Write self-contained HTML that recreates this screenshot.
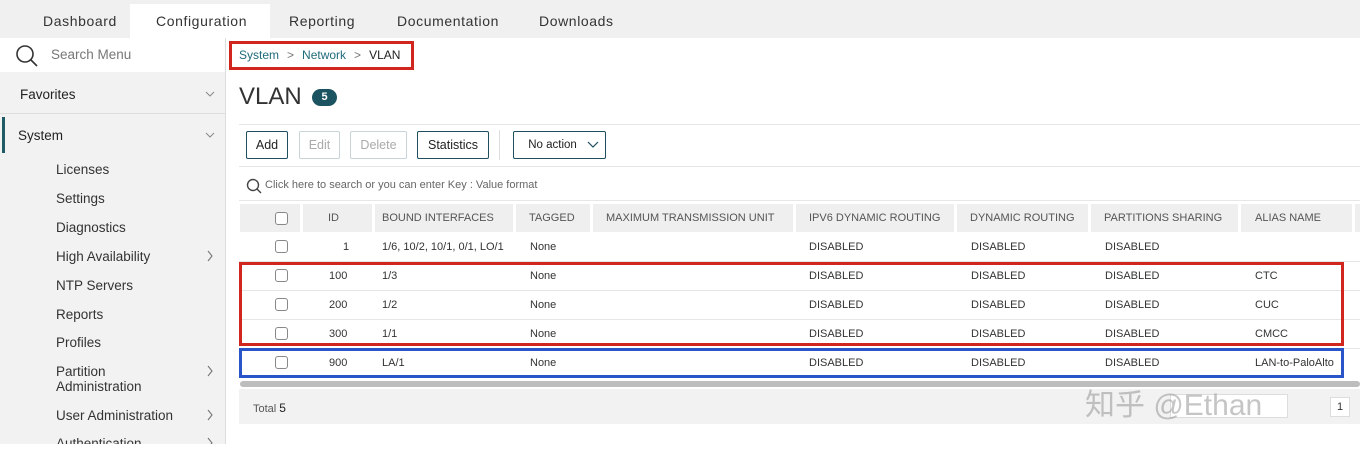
<!DOCTYPE html>
<html><head><meta charset="utf-8"><style>
*{box-sizing:border-box;margin:0;padding:0}
body{width:1360px;height:456px;background:#fff;font-family:"Liberation Sans",sans-serif;position:relative;overflow:hidden;color:#333}
.a{position:absolute;white-space:nowrap}
.nav{left:0;top:0;width:1360px;height:38px;background:#f0f0f0}
.tab{top:13px;font-size:14px;color:#333;letter-spacing:.6px}
.side{left:0;top:38px;width:225px;height:406px;background:#f2f2f2}
.si{left:56px;font-size:13.5px;color:#333}
.btn{top:131px;height:28px;border:1px solid #1f4e5f;border-radius:2px;font-size:12.5px;line-height:26px;text-align:center;background:#fff;color:#222}
.dis{border-color:#c8d4d8;color:#aaa}
.hd{top:204px;height:28px;background:#efefef;font-size:11px;color:#555;line-height:28px;padding-left:7px}
.cb{width:13px;height:13px;border:1.5px solid #888;border-radius:3px;background:#fff}
.row{font-size:11px;color:#333}
.line{left:239px;width:1121px;height:1px;background:#e6e6e6}
</style></head><body>
<div class="a nav"></div>
<div class="a" style="left:130px;top:4px;width:140px;height:34px;background:#fff"></div>
<div class="a tab" style="left:43px">Dashboard</div>
<div class="a tab" style="left:156px">Configuration</div>
<div class="a tab" style="left:289px">Reporting</div>
<div class="a tab" style="left:397px">Documentation</div>
<div class="a tab" style="left:539px">Downloads</div>

<div class="a side"></div>
<div class="a" style="left:0;top:38px;width:225px;height:34px;background:#fff"></div>
<svg class="a" style="left:14px;top:43px" width="26" height="26" viewBox="0 0 26 26"><circle cx="11" cy="11" r="8" fill="none" stroke="#333" stroke-width="1.6"/><line x1="17" y1="17" x2="23" y2="23" stroke="#333" stroke-width="1.6"/></svg>
<div class="a" style="left:51px;top:47px;font-size:13.5px;color:#777">Search Menu</div>
<div class="a" style="left:20px;top:87px;font-size:13.5px;color:#222">Favorites</div>
<svg class="a" style="left:205px;top:90px" width="10" height="8"><polyline points="1,2 5,6 9,2" fill="none" stroke="#888" stroke-width="1"/></svg>
<div class="a" style="left:0;top:113px;width:225px;height:1px;background:#ddd"></div>
<div class="a" style="left:2px;top:117px;width:3px;height:36px;background:#1f5c66"></div>
<div class="a" style="left:18px;top:128px;font-size:13.5px;color:#222">System</div>
<svg class="a" style="left:205px;top:131px" width="10" height="8"><polyline points="1,2 5,6 9,2" fill="none" stroke="#888" stroke-width="1"/></svg>
<div class="a si" style="top:162px">Licenses</div>
<div class="a si" style="top:191px">Settings</div>
<div class="a si" style="top:220px">Diagnostics</div>
<div class="a si" style="top:249px">High Availability</div>
<div class="a si" style="top:278px">NTP Servers</div>
<div class="a si" style="top:307px">Reports</div>
<div class="a si" style="top:335px">Profiles</div>
<div class="a si" style="top:364px;line-height:15px">Partition<br>Administration</div>
<div class="a si" style="top:408px">User Administration</div>
<div class="a si" style="top:436px">Authentication</div>
<svg class="a" style="left:206px;top:250px" width="8" height="12"><polyline points="2,1 6,6 2,11" fill="none" stroke="#777" stroke-width="1.1"/></svg>
<svg class="a" style="left:206px;top:365px" width="8" height="12"><polyline points="2,1 6,6 2,11" fill="none" stroke="#777" stroke-width="1.1"/></svg>
<svg class="a" style="left:206px;top:409px" width="8" height="12"><polyline points="2,1 6,6 2,11" fill="none" stroke="#777" stroke-width="1.1"/></svg>
<svg class="a" style="left:206px;top:437px" width="8" height="12"><polyline points="2,1 6,6 2,11" fill="none" stroke="#777" stroke-width="1.1"/></svg>
<div class="a" style="left:0;top:444px;width:1360px;height:12px;background:#fff"></div>
<div class="a" style="left:225px;top:38px;width:1px;height:406px;background:#ddd"></div>

<div class="a" style="left:229px;top:41px;width:185px;height:29px;border:3px solid #d0261e"></div>
<div class="a" style="left:239px;top:48px;font-size:12px"><span style="color:#1f6b7a">System</span><span style="color:#777;margin:0 8px">&gt;</span><span style="color:#1f6b7a">Network</span><span style="color:#777;margin:0 8px">&gt;</span><span style="color:#222">VLAN</span></div>
<div class="a" style="left:239px;top:83px;font-size:24px;color:#333">VLAN</div>
<div class="a" style="left:312px;top:89px;width:25px;height:17px;border-radius:9px;background:#1c5361;color:#fff;font-size:11px;font-weight:bold;text-align:center;line-height:17px">5</div>

<div class="a line" style="top:124px"></div>
<div class="a btn" style="left:246px;width:42px">Add</div>
<div class="a btn dis" style="left:299px;width:41px">Edit</div>
<div class="a btn dis" style="left:350px;width:57px">Delete</div>
<div class="a btn" style="left:417px;width:72px">Statistics</div>
<div class="a" style="left:499px;top:130px;width:1px;height:30px;background:#ddd"></div>
<div class="a btn" style="left:513px;width:93px;font-size:11.5px;padding-right:14px">No action</div>
<svg class="a" style="left:587px;top:141px" width="12" height="8"><polyline points="1,1 6,6 11,1" fill="none" stroke="#1f4e5f" stroke-width="1.2"/></svg>
<div class="a line" style="top:166px"></div>
<svg class="a" style="left:246px;top:178px" width="16" height="16"><circle cx="7" cy="7" r="5.5" fill="none" stroke="#444" stroke-width="1.4"/><line x1="11" y1="11" x2="15" y2="15" stroke="#444" stroke-width="1.4"/></svg>
<div class="a" style="left:265px;top:179px;font-size:11px;color:#666">Click here to search or you can enter Key : Value format</div>
<div class="a line" style="top:200px"></div>

<div class="a hd" style="left:240px;width:60px"></div><div class="a cb" style="left:275px;top:212px"></div>
<div class="a hd" style="left:303px;width:69px;padding-left:25px">ID</div>
<div class="a hd" style="left:375px;width:138px">BOUND INTERFACES</div>
<div class="a hd" style="left:516px;width:74px;padding-left:13px">TAGGED</div>
<div class="a hd" style="left:593px;width:200px;padding-left:13px">MAXIMUM TRANSMISSION UNIT</div>
<div class="a hd" style="left:796px;width:158px;padding-left:13px">IPV6 DYNAMIC ROUTING</div>
<div class="a hd" style="left:957px;width:131px;padding-left:13px">DYNAMIC ROUTING</div>
<div class="a hd" style="left:1091px;width:147px;padding-left:13px">PARTITIONS SHARING</div>
<div class="a hd" style="left:1241px;width:111px;padding-left:14px">ALIAS NAME</div>
<div class="a hd" style="left:1355px;width:10px"></div>

<div class="a line" style="top:261px"></div><div class="a line" style="top:290px"></div><div class="a line" style="top:319px"></div><div class="a line" style="top:348px"></div>
<div class="a cb" style="left:275px;top:240px"></div><div class="a row" style="left:343px;top:241px">1</div><div class="a row" style="left:382px;top:241px">1/6, 10/2, 10/1, 0/1, LO/1</div><div class="a row" style="left:530px;top:241px">None</div><div class="a row" style="left:809px;top:241px">DISABLED</div><div class="a row" style="left:971px;top:241px">DISABLED</div><div class="a row" style="left:1105px;top:241px">DISABLED</div>
<div class="a cb" style="left:275px;top:269px"></div><div class="a row" style="left:329px;top:270px">100</div><div class="a row" style="left:382px;top:270px">1/3</div><div class="a row" style="left:530px;top:270px">None</div><div class="a row" style="left:809px;top:270px">DISABLED</div><div class="a row" style="left:971px;top:270px">DISABLED</div><div class="a row" style="left:1105px;top:270px">DISABLED</div><div class="a row" style="left:1255px;top:270px">CTC</div>
<div class="a cb" style="left:275px;top:298px"></div><div class="a row" style="left:329px;top:299px">200</div><div class="a row" style="left:382px;top:299px">1/2</div><div class="a row" style="left:530px;top:299px">None</div><div class="a row" style="left:809px;top:299px">DISABLED</div><div class="a row" style="left:971px;top:299px">DISABLED</div><div class="a row" style="left:1105px;top:299px">DISABLED</div><div class="a row" style="left:1255px;top:299px">CUC</div>
<div class="a cb" style="left:275px;top:327px"></div><div class="a row" style="left:329px;top:328px">300</div><div class="a row" style="left:382px;top:328px">1/1</div><div class="a row" style="left:530px;top:328px">None</div><div class="a row" style="left:809px;top:328px">DISABLED</div><div class="a row" style="left:971px;top:328px">DISABLED</div><div class="a row" style="left:1105px;top:328px">DISABLED</div><div class="a row" style="left:1255px;top:328px">CMCC</div>
<div class="a cb" style="left:275px;top:356px"></div><div class="a row" style="left:329px;top:357px">900</div><div class="a row" style="left:382px;top:357px">LA/1</div><div class="a row" style="left:530px;top:357px">None</div><div class="a row" style="left:809px;top:357px">DISABLED</div><div class="a row" style="left:971px;top:357px">DISABLED</div><div class="a row" style="left:1105px;top:357px">DISABLED</div><div class="a row" style="left:1255px;top:357px">LAN-to-PaloAlto</div>

<div class="a" style="left:239px;top:262px;width:1105px;height:84px;border:3px solid #d0261e"></div>
<div class="a" style="left:239px;top:348px;width:1105px;height:30px;border:3px solid #2a55c8"></div>
<div class="a" style="left:240px;top:381px;width:1120px;height:6px;background:#bdbdbd;border-radius:3px"></div>
<div class="a" style="left:239px;top:389px;width:1121px;height:35px;background:#f2f2f2"></div>
<div class="a" style="left:253px;top:401px;font-size:11px;color:#555">Total <span style="color:#222;font-size:12px">5</span></div>
<div class="a" style="left:1170px;top:394px;width:118px;height:24px;background:#fff;border:1px solid #ddd"></div>
<div class="a" style="left:1330px;top:397px;width:20px;height:20px;background:#fff;border:1px solid #ddd;font-size:11px;text-align:center;line-height:18px">1</div>
<div class="a" style="left:1085px;top:380px;font-size:30px;color:rgba(150,150,150,.55);font-family:'Liberation Sans','Noto Sans CJK SC',sans-serif">知乎 @Ethan</div>
</body></html>
